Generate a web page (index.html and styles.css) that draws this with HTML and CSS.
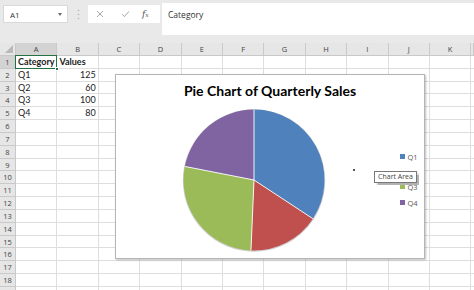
FILE: index.html
```html
<!DOCTYPE html>
<html lang="en">
<head>
    <meta charset="UTF-8">
    <title>Quarterly Sales</title>
    <link rel="stylesheet" href="styles.css">
</head>
<body>

    <div class="toolbar">
        <div class="namebox"><span>A1</span><span class="caret"></span></div>
        <div class="grip">
            <svg width="3" height="11" viewBox="0 0 3 11"><circle cx="1.5" cy="1.5" r="0.8" fill="#b5b5b5"/><circle cx="1.5" cy="5.5" r="0.8" fill="#b5b5b5"/><circle cx="1.5" cy="9.5" r="0.8" fill="#b5b5b5"/></svg>
        </div>
        <div class="fxbox">
            <svg class="fx-cancel" width="8" height="8" viewBox="0 0 8 8"><path d="M1 1L7 7M7 1L1 7" stroke="#a6a6a6" stroke-width="1" fill="none"/></svg>
            <svg class="fx-ok" width="9" height="8" viewBox="0 0 9 8"><path d="M1 4.2L3.4 6.6L8 1.4" stroke="#a6a6a6" stroke-width="1" fill="none"/></svg>
            <span class="fx-fn">f<small>x</small></span>
        </div>
        <div class="formula">Category</div>
    </div>

    <div class="sheet">
        <div class="grid" id="grid">
            <div class="hd corner"><svg width="8" height="8" viewBox="0 0 8 8"><polygon points="8,0 8,8 0,8" fill="#b9b9b9"/></svg></div>
            <div class="hd active">A</div><div class="hd">B</div><div class="hd">C</div><div class="hd">D</div>
            <div class="hd">E</div><div class="hd">F</div><div class="hd">G</div><div class="hd">H</div>
            <div class="hd">I</div><div class="hd">J</div><div class="hd">K</div><div class="hd"></div>

            <div class="rn active">1</div>
            <div class="c b sel">Category</div><div class="c b">Values</div>
            <div class="c"></div><div class="c"></div><div class="c"></div><div class="c"></div><div class="c"></div>
            <div class="c"></div><div class="c"></div><div class="c"></div><div class="c"></div><div class="c"></div>

            <div class="rn">2</div>
            <div class="c">Q1</div><div class="c num">125</div>
            <div class="c"></div><div class="c"></div><div class="c"></div><div class="c"></div><div class="c"></div>
            <div class="c"></div><div class="c"></div><div class="c"></div><div class="c"></div><div class="c"></div>

            <div class="rn">3</div>
            <div class="c">Q2</div><div class="c num">60</div>
            <div class="c"></div><div class="c"></div><div class="c"></div><div class="c"></div><div class="c"></div>
            <div class="c"></div><div class="c"></div><div class="c"></div><div class="c"></div><div class="c"></div>

            <div class="rn">4</div>
            <div class="c">Q3</div><div class="c num">100</div>
            <div class="c"></div><div class="c"></div><div class="c"></div><div class="c"></div><div class="c"></div>
            <div class="c"></div><div class="c"></div><div class="c"></div><div class="c"></div><div class="c"></div>

            <div class="rn">5</div>
            <div class="c">Q4</div><div class="c num">80</div>
            <div class="c"></div><div class="c"></div><div class="c"></div><div class="c"></div><div class="c"></div>
            <div class="c"></div><div class="c"></div><div class="c"></div><div class="c"></div><div class="c"></div>
        </div>

        <div class="chart">
            <div class="chart-title">Pie Chart of Quarterly Sales</div>
            <svg class="pie" width="308" height="183" viewBox="0 0 308 183">
                <circle cx="138" cy="105.5" r="71.2" fill="#cfcfcf"/>
                <path d="M138 105 L138 34.5 A70.5 70.5 0 0 1 196.92 143.7 Z" fill="#4f81bd"/>
                <path d="M138 105 L196.92 143.7 A70.5 70.5 0 0 1 134.96 175.44 Z" fill="#c0504d"/>
                <path d="M138 105 L134.96 175.44 A70.5 70.5 0 0 1 68.82 91.43 Z" fill="#9bbb59"/>
                <path d="M138 105 L68.82 91.43 A70.5 70.5 0 0 1 138 34.5 Z" fill="#8064a2"/>
                <path d="M138 105 L138 34.5 M138 105 L196.92 143.7 M138 105 L134.96 175.44 M138 105 L68.82 91.43" stroke="#fff" stroke-width="0.9" fill="none"/>
            </svg>
            <div class="legend">
                <div class="legend-item"><span class="sw q1"></span>Q1</div>
                <!-- Q2 sits under the hover tooltip -->
                <div class="legend-item covered"><span class="sw q2"></span>Q2</div>
                <div class="legend-item"><span class="sw q3"></span>Q3</div>
                <div class="legend-item"><span class="sw q4"></span>Q4</div>
            </div>
            <div class="cursor"></div>
            <div class="tip">Chart Area</div>
        </div>
    </div>

    <script>
        // fill the empty rows below the data
        const grid = document.getElementById('grid');
        for (let r = 6; r <= 19; r++) {
            const rn = document.createElement('div');
            rn.className = 'rn';
            // row 19 is only a sliver at the bottom edge
            if (r < 19) rn.textContent = r;
            grid.appendChild(rn);
            for (let c = 0; c < 12; c++) {
                const cell = document.createElement('div');
                cell.className = 'c';
                grid.appendChild(cell);
            }
        }
    </script>

</body>
</html>
```

FILE: styles.css
```css
/* General */
body, html {
    margin: 0;
    padding: 0;
}

body {
    width: 474px;
    height: 290px;
    overflow: hidden;
    background-color: #e9e9e9;
    font-family: Lato, "Liberation Sans", sans-serif;
    color: #222;
}

/* Formula bar */
.toolbar {
    height: 43px;
    display: flex;
    align-items: flex-start;
}

.namebox {
    margin: 5px 0 0 3px;
    width: 65px;
    height: 18px;
    box-sizing: border-box;
    background-color: #fff;
    border: 1px solid #d9d9d9;
    display: flex;
    align-items: center;
    justify-content: space-between;
    padding: 0 5px 0 6px;
    font-family: "Open Sans", sans-serif;
    font-size: 8px;
    color: #333;
}

.caret {
    border-left: 2.5px solid transparent;
    border-right: 2.5px solid transparent;
    border-top: 3px solid #6b6b6b;
}

.grip {
    width: 20px;
    margin-top: 9px;
    display: flex;
    justify-content: center;
}

.fxbox {
    margin-top: 5px;
    width: 72px;
    height: 18px;
    background-color: #fff;
    display: flex;
    align-items: center;
}

.fx-cancel {
    margin-left: 8px;
}

.fx-ok {
    margin-left: 17px;
}

.fx-fn {
    margin-left: 12px;
    font-family: "DejaVu Serif", serif;
    font-style: italic;
    font-size: 9px;
    color: #555;
}

.fx-fn small {
    font-size: 6px;
}

.formula {
    margin: 3px 0 0 2px;
    flex: 1;
    height: 32px;
    box-sizing: border-box;
    background-color: #fff;
    padding: 6px 0 0 6px;
    font-family: "Open Sans", sans-serif;
    font-size: 8.5px;
    line-height: 12px;
    color: #333;
}

/* Sheet grid */
.sheet {
    position: relative;
    overflow: hidden;
}

.grid {
    display: grid;
    grid-template-columns: 16px repeat(11, 41.4px) 3px;
    grid-template-rows: 13px;
    grid-auto-rows: 12.83px;
    background-color: #fff;
}

.hd, .rn {
    background-color: #e6e6e6;
    border-right: 1px solid #c9c9c9;
    border-bottom: 1px solid #c9c9c9;
    box-sizing: border-box;
    display: flex;
    align-items: center;
    justify-content: center;
    font-family: "Open Sans", sans-serif;
    font-size: 7.5px;
    color: #444;
}

.corner {
    align-items: flex-end;
    justify-content: flex-end;
    padding: 0 2px 2px 0;
}

.hd.active, .rn.active {
    background-color: #d3d3d3;
}

.c {
    border-right: 1px solid #dedede;
    border-bottom: 1px solid #dedede;
    box-sizing: border-box;
    padding: 0 2px;
    font-size: 9px;
    line-height: 12px;
    white-space: nowrap;
}

.num {
    text-align: right;
}

.b {
    font-weight: bold;
}

.sel {
    position: relative;
}

.sel::after {
    content: "";
    position: absolute;
    left: -1px;
    top: -1px;
    right: -1px;
    bottom: -1px;
    border: 1.5px solid #217346;
}

.sel::before {
    content: "";
    position: absolute;
    right: -3px;
    bottom: -3px;
    width: 4px;
    height: 4px;
    background-color: #217346;
    border: 1px solid #fff;
    box-sizing: border-box;
    z-index: 1;
}

/* Chart */
.chart {
    position: absolute;
    left: 115px;
    top: 31px;
    width: 310px;
    height: 185px;
    box-sizing: border-box;
    border: 1px solid #b5b5b5;
    background-color: #fff;
    box-shadow: 1px 1px 2px rgba(0, 0, 0, 0.25);
}

.chart-title {
    padding-top: 8px;
    text-align: center;
    font-weight: bold;
    font-size: 14px;
    line-height: 16px;
    color: #000;
}

.pie {
    position: absolute;
    left: 0;
    top: 0;
}

.legend {
    position: absolute;
    left: 284px;
    top: 74px;
    display: flex;
    flex-direction: column;
}

.legend-item {
    height: 15.3px;
    display: flex;
    align-items: center;
    gap: 3px;
    font-family: "Open Sans", sans-serif;
    font-size: 7.5px;
    color: #595959;
}

.legend-item.covered {
    visibility: hidden;
}

.sw {
    width: 4.5px;
    height: 4.5px;
}

.q1 { background-color: #4f81bd; }
.q2 { background-color: #c0504d; }
.q3 { background-color: #9bbb59; }
.q4 { background-color: #8064a2; }

.cursor {
    position: absolute;
    left: 237px;
    top: 94px;
    width: 1.5px;
    height: 1.5px;
    background-color: #555;
}

/* Hover tooltip */
.tip {
    position: absolute;
    left: 258px;
    top: 96px;
    width: 43px;
    height: 12px;
    box-sizing: border-box;
    border: 1px solid #777;
    background-color: #fff;
    box-shadow: 1.5px 1.5px 1px rgba(0, 0, 0, 0.3);
    font-family: "Open Sans", sans-serif;
    font-size: 7px;
    line-height: 10px;
    text-align: center;
    color: #444;
    white-space: nowrap;
}
```
